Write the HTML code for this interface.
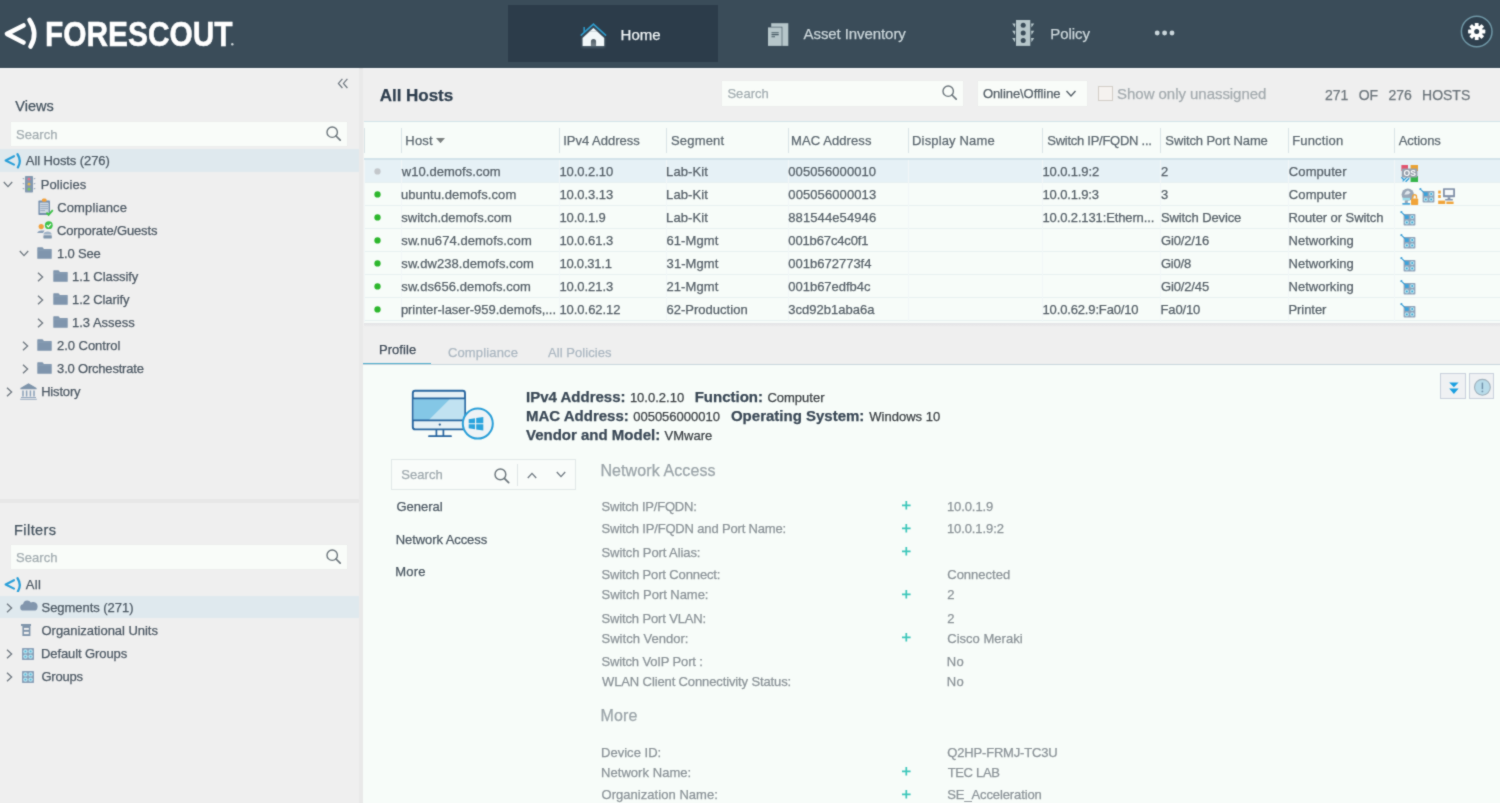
<!DOCTYPE html>
<html><head><meta charset="utf-8"><title>Forescout Console</title>
<style>
html,body{margin:0;padding:0}
body{width:1500px;height:803px;overflow:hidden;position:relative;background:#efefef;font-family:"Liberation Sans",sans-serif}
.a{position:absolute;display:block}
.t{position:absolute;white-space:nowrap;-webkit-text-stroke:0.25px}
#w{position:absolute;left:0;top:0;width:1500px;height:803px;filter:url(#soft)}
.sb{position:absolute;background:#f9fcf9;box-shadow:0 0 1px #e2e6e2}
</style></head><body>
<svg width="0" height="0" style="position:absolute"><defs><filter id="soft" x="0" y="0" width="100%" height="100%" color-interpolation-filters="sRGB"><feConvolveMatrix order="3" kernelMatrix="0.03 0.09 0.03 0.09 0.52 0.09 0.03 0.09 0.03" edgeMode="duplicate" preserveAlpha="false"/></filter></defs></svg>
<div id="w">

<div class="a" style="left:-10px;top:-10px;width:1520px;height:77.5px;background:#3a4c59"></div>
<div class="a" style="left:-10px;top:67.6px;width:1520px;height:1.4px;background:#f8f9fb"></div>
<svg class="a" style="left:0;top:10px" width="245" height="48" viewBox="0 0 245 48">
<path d="M23.5 15.5 L7 23.8 L23.5 32.5" fill="none" stroke="#fff" stroke-width="4.7" stroke-linecap="round" stroke-linejoin="round"/>
<path d="M29.5 10 Q38.5 23.5 30.5 36.5" fill="none" stroke="#fff" stroke-width="4.6" stroke-linecap="round"/>
<text x="45" y="35.6" font-family="Liberation Sans" font-weight="bold" font-size="35" fill="#fff" stroke="#fff" stroke-width="0.5" textLength="187.5" lengthAdjust="spacingAndGlyphs">FORESCOUT</text>
<circle cx="232.3" cy="34.3" r="1.2" fill="#c9d2d6"/>
</svg>
<div class="a" style="left:508px;top:5px;width:210px;height:57px;background:#2c3c4a"></div>
<svg class="a" style="left:579px;top:21px" width="30" height="30" viewBox="0 0 30 30">
<defs><filter id="gl" x="-30%" y="-30%" width="160%" height="160%"><feGaussianBlur stdDeviation="1.3"/></filter>
<linearGradient id="dg" x1="0" y1="0" x2="0" y2="1"><stop offset="0" stop-color="#4c5963"/><stop offset="1" stop-color="#7a868e"/></linearGradient></defs>
<path d="M3 17 L14.4 6 L25.8 17 L25.8 26.4 L3 26.4 Z" fill="#9fb7c2" opacity="0.33" filter="url(#gl)"/>
<path d="M14.4 6.9 L25.2 16.9 L25.2 24.9 L3.6 24.9 L3.6 16.9 Z" fill="#f1f7f9"/>
<path d="M10.6 10.35 H18.2" stroke="#aab9c1" stroke-width="0.55"/>
<path d="M11.9 24.95 V20.7 A2.6 2.6 0 0 1 17.1 20.7 V24.95 Z" fill="url(#dg)"/>
<rect x="4.4" y="6" width="1.5" height="5" fill="#2f9bcb"/>
<path d="M1.7 14.7 L14.4 3.2 L27.1 14.7" fill="none" stroke="#2f9bcb" stroke-width="1.65" stroke-linejoin="miter"/>
</svg>
<div class="t" style="left:620.60px;top:24.50px;font-size:15px;line-height:20px;color:#eef3f4;letter-spacing:0.008px;">Home</div>
<svg class="a" style="left:768px;top:23px" width="21" height="24" viewBox="0 0 21 24">
<rect x="3.2" y="0.2" width="17.1" height="22.7" fill="#b6c6ca"/>
<rect x="-0.6" y="3.8" width="14.9" height="20" fill="#3a4c59"/>
<rect x="0" y="4.4" width="13.7" height="18.5" fill="#b6c6ca"/>
<path d="M3.5 9.7 H10.7 M3.5 11.6 H10.7 M3.5 13.7 H7" stroke="#4a5d67" stroke-width="1.1"/>
</svg>
<div class="t" style="left:803.60px;top:24.40px;font-size:15px;line-height:20px;color:#cbd6da;letter-spacing:-0.085px;">Asset Inventory</div>
<svg class="a" style="left:1011px;top:19px" width="25" height="28" viewBox="0 0 25 28">
<rect x="5" y="1" width="14.3" height="25.9" fill="#b6c6ca"/>
<circle cx="12.2" cy="6.3" r="2.5" fill="#3a4c59"/><circle cx="12.2" cy="13.9" r="2.5" fill="#3a4c59"/><circle cx="12.2" cy="21.5" r="2.5" fill="#3a4c59"/>
<path d="M1.2 4.4 L4.3 4.4 L3.9 8.600000000000001 Z M23.2 4.4 L20.1 4.4 L20.5 8.600000000000001 Z" fill="#b6c6ca"/><path d="M1.2 11.8 L4.3 11.8 L3.9 16.0 Z M23.2 11.8 L20.1 11.8 L20.5 16.0 Z" fill="#b6c6ca"/><path d="M1.2 19.0 L4.3 19.0 L3.9 23.2 Z M23.2 19.0 L20.1 19.0 L20.5 23.2 Z" fill="#b6c6ca"/>
</svg>
<div class="t" style="left:1050.20px;top:24.40px;font-size:15px;line-height:20px;color:#cbd6da;letter-spacing:-0.043px;">Policy</div>
<svg class="a" style="left:1150px;top:26px" width="30" height="14" viewBox="0 0 30 14"><circle cx="7.2" cy="7" r="2.45" fill="#c9d5da"/><circle cx="14.6" cy="7" r="2.45" fill="#c9d5da"/><circle cx="22" cy="7" r="2.45" fill="#c9d5da"/></svg>
<svg class="a" style="left:1459px;top:14px" width="36" height="36" viewBox="0 0 36 36">
<circle cx="17.7" cy="17.5" r="15.3" fill="#2f404e" stroke="#6f97a6" stroke-width="1.5"/>
<g transform="translate(17.7 17.5)" fill="#fff">
<circle r="5.9"/>
<g id="tg"><rect x="-1.9" y="-8.6" width="3.8" height="4" rx="0.6"/></g>
<use href="#tg" transform="rotate(45)"/><use href="#tg" transform="rotate(90)"/><use href="#tg" transform="rotate(135)"/>
<use href="#tg" transform="rotate(180)"/><use href="#tg" transform="rotate(225)"/><use href="#tg" transform="rotate(270)"/><use href="#tg" transform="rotate(315)"/>
<circle r="2.5" fill="#2f404e"/>
</g></svg>
<div class="a" style="left:359px;top:68px;width:4px;height:745px;background:#e9e9e9"></div>
<div class="a" style="left:-10px;top:499px;width:369px;height:4px;background:#e7e7e7"></div>
<svg class="a" style="left:337px;top:78px" width="12" height="11" viewBox="0 0 12 11">
<path d="M5.4 0.8 L1.4 5.4 L5.4 10 M10.4 0.8 L6.4 5.4 L10.4 10" fill="none" stroke="#6f7880" stroke-width="1.2"/></svg>
<div class="t" style="left:15.26px;top:96.48px;font-size:14.5px;line-height:20px;color:#44535f;letter-spacing:0.005px;">Views</div>
<div class="sb" style="left:11px;top:122px;width:336px;height:24px"></div>
<div class="t" style="left:16.02px;top:124.90px;font-size:13px;line-height:20px;color:#a3adb1;letter-spacing:0.064px;">Search</div>
<svg class="a" style="left:326px;top:125.8px" width="15" height="15" viewBox="0 0 15 15"><circle cx="6.2" cy="6.2" r="5.2" fill="none" stroke="#6d777d" stroke-width="1.4"/><path d="M10 10 L14.2 14.2" stroke="#6d777d" stroke-width="1.7" stroke-linecap="round"/></svg>
<div class="a" style="left:-10px;top:149px;width:369px;height:23px;background:#dfe9ee"></div>
<div class="t" style="left:25.80px;top:151.20px;font-size:13px;line-height:20px;color:#4d5964;letter-spacing:-0.091px;">All Hosts (276)</div>
<svg class="a" style="left:4.2px;top:153.1px" width="17.68" height="15.600000000000001" viewBox="0 0 17 15"><path d="M9.6 3.1 L1.6 7.3 L9.6 11.2" fill="none" stroke="#2b9fd8" stroke-width="2.1" stroke-linecap="round" stroke-linejoin="round"/><path d="M13 1.2 Q17.2 7.5 13.4 13.8" fill="none" stroke="#2b9fd8" stroke-width="2.2" stroke-linecap="round"/></svg>
<div class="t" style="left:40.66px;top:174.80px;font-size:13px;line-height:20px;color:#4d5964;letter-spacing:0.130px;">Policies</div>
<svg class="a" style="left:3.4px;top:180.9px" width="10" height="7" viewBox="0 0 10 7"><path d="M0.8 1 L5 5.6 L9.2 1" fill="none" stroke="#6f7880" stroke-width="1.3"/></svg>
<svg class="a" style="left:22px;top:176.0px" width="14.0" height="16.5" viewBox="0 0 14 16.5"><rect x="3" y="0" width="8" height="16.5" rx="0.8" fill="#8399b0"/><circle cx="7" cy="3.2" r="1.4" fill="#e2758c"/><path d="M0.2 1.9000000000000001 L2.3 1.9000000000000001 L2.1 3.8000000000000003 Z" fill="#9aabbd"/><path d="M13.8 1.9000000000000001 L11.7 1.9000000000000001 L11.9 3.8000000000000003 Z" fill="#9aabbd"/><circle cx="7" cy="8.2" r="1.4" fill="#e9b750"/><path d="M0.2 6.8999999999999995 L2.3 6.8999999999999995 L2.1 8.799999999999999 Z" fill="#9aabbd"/><path d="M13.8 6.8999999999999995 L11.7 6.8999999999999995 L11.9 8.799999999999999 Z" fill="#9aabbd"/><circle cx="7" cy="13.2" r="1.4" fill="#7dc860"/><path d="M0.2 11.899999999999999 L2.3 11.899999999999999 L2.1 13.799999999999999 Z" fill="#9aabbd"/><path d="M13.8 11.899999999999999 L11.7 11.899999999999999 L11.9 13.799999999999999 Z" fill="#9aabbd"/></svg>
<div class="t" style="left:57.25px;top:197.80px;font-size:13px;line-height:20px;color:#4d5964;letter-spacing:0.118px;">Compliance</div>
<svg class="a" style="left:38px;top:197.5px" width="16" height="19" viewBox="0 0 16 19">
<rect x="0.4" y="2.6" width="11.6" height="14.4" rx="0.8" fill="#7790ad"/>
<rect x="1.8" y="4.6" width="8.8" height="10.4" fill="#cfd9e3"/>
<path d="M2.4 6.6 H10 M2.4 8.6 H10 M2.4 10.6 H10 M2.4 12.6 H7" stroke="#8da0b6" stroke-width="0.8"/>
<rect x="3.9" y="0.5" width="4.7" height="3.3" rx="1.5" fill="#f0a03c"/>
<path d="M8.4 14.6 L10.6 16.8 L14.8 12.2" fill="none" stroke="#3fc24a" stroke-width="1.9"/>
</svg>
<div class="t" style="left:56.95px;top:220.80px;font-size:13px;line-height:20px;color:#4d5964;letter-spacing:-0.140px;">Corporate/Guests</div>
<svg class="a" style="left:36.5px;top:221.0px" width="17" height="18" viewBox="0 0 17 18">
<circle cx="4.2" cy="5.6" r="2.6" fill="#f0a03c"/>
<circle cx="11.8" cy="4.2" r="3.9" fill="#3fc24a"/>
<path d="M9.8 4.2 L11.3 5.8 L13.9 2.8" fill="none" stroke="#fff" stroke-width="1.2"/>
<path d="M0.2 12 Q1 9.4 4.4 9.4 L7.6 9.4 L6 12 Z" fill="#8aa0b8"/>
<path d="M6.4 13.4 Q7 10.4 10.6 10.4 Q14.2 10.4 14.8 13.4 Z" fill="#9fb2c6"/>
<rect x="6.4" y="14.2" width="8.4" height="3.2" rx="0.6" fill="#7f95ab"/>
</svg>
<div class="t" style="left:56.92px;top:243.80px;font-size:13px;line-height:20px;color:#4d5964;letter-spacing:-0.160px;">1.0 See</div>
<svg class="a" style="left:19.4px;top:250.3px" width="10" height="7" viewBox="0 0 10 7"><path d="M0.8 1 L5 5.6 L9.2 1" fill="none" stroke="#6f7880" stroke-width="1.3"/></svg>
<svg class="a" style="left:37.3px;top:247.3px" width="15" height="12" viewBox="0 0 15 12"><path d="M0.3 0.8 Q0.3 0.2 0.9 0.2 L5.2 0.2 Q5.8 0.2 6.1 0.8 L6.8 2 L14.1 2 Q14.7 2 14.7 2.6 L14.7 11.2 Q14.7 11.8 14.1 11.8 L0.9 11.8 Q0.3 11.8 0.3 11.2 Z" fill="#7f95ad"/><path d="M0.3 3.1 L14.7 3.1" stroke="#93a7bb" stroke-width="0.6"/></svg>
<div class="t" style="left:72.03px;top:266.80px;font-size:13px;line-height:20px;color:#4d5964;letter-spacing:-0.082px;">1.1 Classify</div>
<svg class="a" style="left:37.2px;top:271.5px" width="7" height="10" viewBox="0 0 7 10"><path d="M1 0.8 L5.6 5 L1 9.2" fill="none" stroke="#6f7880" stroke-width="1.3"/></svg>
<svg class="a" style="left:53px;top:270.3px" width="15" height="12" viewBox="0 0 15 12"><path d="M0.3 0.8 Q0.3 0.2 0.9 0.2 L5.2 0.2 Q5.8 0.2 6.1 0.8 L6.8 2 L14.1 2 Q14.7 2 14.7 2.6 L14.7 11.2 Q14.7 11.8 14.1 11.8 L0.9 11.8 Q0.3 11.8 0.3 11.2 Z" fill="#7f95ad"/><path d="M0.3 3.1 L14.7 3.1" stroke="#93a7bb" stroke-width="0.6"/></svg>
<div class="t" style="left:72.03px;top:289.80px;font-size:13px;line-height:20px;color:#4d5964;letter-spacing:-0.106px;">1.2 Clarify</div>
<svg class="a" style="left:37.2px;top:294.5px" width="7" height="10" viewBox="0 0 7 10"><path d="M1 0.8 L5.6 5 L1 9.2" fill="none" stroke="#6f7880" stroke-width="1.3"/></svg>
<svg class="a" style="left:53px;top:293.3px" width="15" height="12" viewBox="0 0 15 12"><path d="M0.3 0.8 Q0.3 0.2 0.9 0.2 L5.2 0.2 Q5.8 0.2 6.1 0.8 L6.8 2 L14.1 2 Q14.7 2 14.7 2.6 L14.7 11.2 Q14.7 11.8 14.1 11.8 L0.9 11.8 Q0.3 11.8 0.3 11.2 Z" fill="#7f95ad"/><path d="M0.3 3.1 L14.7 3.1" stroke="#93a7bb" stroke-width="0.6"/></svg>
<div class="t" style="left:72.03px;top:312.80px;font-size:13px;line-height:20px;color:#4d5964;letter-spacing:-0.014px;">1.3 Assess</div>
<svg class="a" style="left:37.2px;top:317.5px" width="7" height="10" viewBox="0 0 7 10"><path d="M1 0.8 L5.6 5 L1 9.2" fill="none" stroke="#6f7880" stroke-width="1.3"/></svg>
<svg class="a" style="left:53px;top:316.3px" width="15" height="12" viewBox="0 0 15 12"><path d="M0.3 0.8 Q0.3 0.2 0.9 0.2 L5.2 0.2 Q5.8 0.2 6.1 0.8 L6.8 2 L14.1 2 Q14.7 2 14.7 2.6 L14.7 11.2 Q14.7 11.8 14.1 11.8 L0.9 11.8 Q0.3 11.8 0.3 11.2 Z" fill="#7f95ad"/><path d="M0.3 3.1 L14.7 3.1" stroke="#93a7bb" stroke-width="0.6"/></svg>
<div class="t" style="left:56.95px;top:335.80px;font-size:13px;line-height:20px;color:#4d5964;letter-spacing:-0.021px;">2.0 Control</div>
<svg class="a" style="left:21.6px;top:340.5px" width="7" height="10" viewBox="0 0 7 10"><path d="M1 0.8 L5.6 5 L1 9.2" fill="none" stroke="#6f7880" stroke-width="1.3"/></svg>
<svg class="a" style="left:37.3px;top:339.3px" width="15" height="12" viewBox="0 0 15 12"><path d="M0.3 0.8 Q0.3 0.2 0.9 0.2 L5.2 0.2 Q5.8 0.2 6.1 0.8 L6.8 2 L14.1 2 Q14.7 2 14.7 2.6 L14.7 11.2 Q14.7 11.8 14.1 11.8 L0.9 11.8 Q0.3 11.8 0.3 11.2 Z" fill="#7f95ad"/><path d="M0.3 3.1 L14.7 3.1" stroke="#93a7bb" stroke-width="0.6"/></svg>
<div class="t" style="left:57.11px;top:358.80px;font-size:13px;line-height:20px;color:#4d5964;letter-spacing:-0.202px;">3.0 Orchestrate</div>
<svg class="a" style="left:21.6px;top:363.5px" width="7" height="10" viewBox="0 0 7 10"><path d="M1 0.8 L5.6 5 L1 9.2" fill="none" stroke="#6f7880" stroke-width="1.3"/></svg>
<svg class="a" style="left:37.3px;top:362.3px" width="15" height="12" viewBox="0 0 15 12"><path d="M0.3 0.8 Q0.3 0.2 0.9 0.2 L5.2 0.2 Q5.8 0.2 6.1 0.8 L6.8 2 L14.1 2 Q14.7 2 14.7 2.6 L14.7 11.2 Q14.7 11.8 14.1 11.8 L0.9 11.8 Q0.3 11.8 0.3 11.2 Z" fill="#7f95ad"/><path d="M0.3 3.1 L14.7 3.1" stroke="#93a7bb" stroke-width="0.6"/></svg>
<div class="t" style="left:41.16px;top:381.80px;font-size:13px;line-height:20px;color:#4d5964;letter-spacing:-0.170px;">History</div>
<svg class="a" style="left:6.4px;top:386.5px" width="7" height="10" viewBox="0 0 7 10"><path d="M1 0.8 L5.6 5 L1 9.2" fill="none" stroke="#6f7880" stroke-width="1.3"/></svg>
<svg class="a" style="left:20px;top:383.0px" width="17" height="17" viewBox="0 0 17 17">
<path d="M8.5 0.2 L16.6 5 L16.6 6.2 L0.4 6.2 L0.4 5 Z" fill="#7f95ab"/>
<path d="M3 7.4 V13.4 M6.6 7.4 V13.4 M10.4 7.4 V13.4 M14 7.4 V13.4" stroke="#8aa0b8" stroke-width="1.5"/>
<rect x="1" y="14" width="15" height="0.9" fill="#8aa0b8"/>
<rect x="0.2" y="15.8" width="16.6" height="0.9" fill="#8aa0b8"/>
</svg>
<div class="t" style="left:14.04px;top:519.78px;font-size:14.5px;line-height:20px;color:#44535f;letter-spacing:0.432px;">Filters</div>
<div class="sb" style="left:11px;top:545px;width:336px;height:24px"></div>
<div class="t" style="left:16.02px;top:547.90px;font-size:13px;line-height:20px;color:#a3adb1;letter-spacing:0.064px;">Search</div>
<svg class="a" style="left:326px;top:548.8px" width="15" height="15" viewBox="0 0 15 15"><circle cx="6.2" cy="6.2" r="5.2" fill="none" stroke="#6d777d" stroke-width="1.4"/><path d="M10 10 L14.2 14.2" stroke="#6d777d" stroke-width="1.7" stroke-linecap="round"/></svg>
<div class="a" style="left:-10px;top:595.5px;width:369px;height:22.5px;background:#dfe9ee"></div>
<svg class="a" style="left:4.2px;top:576.8px" width="17.68" height="15.600000000000001" viewBox="0 0 17 15"><path d="M9.6 3.1 L1.6 7.3 L9.6 11.2" fill="none" stroke="#2b9fd8" stroke-width="2.1" stroke-linecap="round" stroke-linejoin="round"/><path d="M13 1.2 Q17.2 7.5 13.4 13.8" fill="none" stroke="#2b9fd8" stroke-width="2.2" stroke-linecap="round"/></svg>
<div class="t" style="left:25.70px;top:574.70px;font-size:13px;line-height:20px;color:#4d5964;letter-spacing:0.341px;">All</div>
<svg class="a" style="left:6.4px;top:602.6px" width="7" height="10" viewBox="0 0 7 10"><path d="M1 0.8 L5.6 5 L1 9.2" fill="none" stroke="#6f7880" stroke-width="1.3"/></svg>
<svg class="a" style="left:20px;top:600px" width="18" height="11" viewBox="0 0 18 11">
<path d="M3.6 10.6 Q0.2 10.6 0.2 7.4 Q0.2 4.6 3 4.2 Q3.6 0.4 7.2 0.4 Q9.8 0.4 10.8 2.6 Q12 1.6 13.6 2 Q17.6 2.6 17.6 6.4 Q17.6 10.6 13.8 10.6 Z" fill="#8296ad"/></svg>
<div class="t" style="left:41.52px;top:597.80px;font-size:13px;line-height:20px;color:#4d5964;letter-spacing:-0.041px;">Segments (271)</div>
<svg class="a" style="left:20.5px;top:623.6px" width="10.8" height="12.2" viewBox="0 0 11 12.5">
<rect x="0" y="0" width="11" height="2" fill="#7f94aa"/>
<rect x="1.4" y="2" width="8.2" height="10.5" fill="#7f94aa"/>
<rect x="3" y="4" width="5" height="2" fill="#efefef"/>
<rect x="3" y="8" width="5" height="2.4" fill="#efefef"/>
</svg>
<div class="t" style="left:41.52px;top:620.70px;font-size:13px;line-height:20px;color:#4d5964;letter-spacing:-0.033px;">Organizational Units</div>
<svg class="a" style="left:6.4px;top:648.5px" width="7" height="10" viewBox="0 0 7 10"><path d="M1 0.8 L5.6 5 L1 9.2" fill="none" stroke="#6f7880" stroke-width="1.3"/></svg>
<svg class="a" style="left:22.3px;top:647.5px" width="12" height="12" viewBox="0 0 12 12"><rect x="0" y="0" width="12" height="12" rx="0.8" fill="#8aa0b8"/><circle cx="3.4" cy="3.4" r="2.2" fill="#b5e2ef"/><circle cx="8.6" cy="3.4" r="2.2" fill="#b5e2ef"/><circle cx="3.4" cy="8.6" r="2.2" fill="#b5e2ef"/><circle cx="8.6" cy="8.6" r="2.2" fill="#b5e2ef"/><circle cx="3.4" cy="3.4" r="0.9" fill="#53b4d6"/><circle cx="8.6" cy="3.4" r="0.9" fill="#53b4d6"/><circle cx="3.4" cy="8.6" r="0.9" fill="#53b4d6"/><circle cx="8.6" cy="8.6" r="0.9" fill="#53b4d6"/></svg>
<div class="t" style="left:41.06px;top:643.50px;font-size:13px;line-height:20px;color:#4d5964;letter-spacing:-0.102px;">Default Groups</div>
<svg class="a" style="left:6.4px;top:671.5px" width="7" height="10" viewBox="0 0 7 10"><path d="M1 0.8 L5.6 5 L1 9.2" fill="none" stroke="#6f7880" stroke-width="1.3"/></svg>
<svg class="a" style="left:22.3px;top:670.6px" width="12" height="12" viewBox="0 0 12 12"><rect x="0" y="0" width="12" height="12" rx="0.8" fill="#8aa0b8"/><circle cx="3.4" cy="3.4" r="2.2" fill="#b5e2ef"/><circle cx="8.6" cy="3.4" r="2.2" fill="#b5e2ef"/><circle cx="3.4" cy="8.6" r="2.2" fill="#b5e2ef"/><circle cx="8.6" cy="8.6" r="2.2" fill="#b5e2ef"/><circle cx="3.4" cy="3.4" r="0.9" fill="#53b4d6"/><circle cx="8.6" cy="3.4" r="0.9" fill="#53b4d6"/><circle cx="3.4" cy="8.6" r="0.9" fill="#53b4d6"/><circle cx="8.6" cy="8.6" r="0.9" fill="#53b4d6"/></svg>
<div class="t" style="left:41.45px;top:666.60px;font-size:13px;line-height:20px;color:#4d5964;letter-spacing:-0.227px;">Groups</div>
<div class="t" style="left:379.77px;top:84.51px;font-size:17px;line-height:22px;color:#2e3e4e;font-weight:bold;letter-spacing:-0.036px;">All Hosts</div>
<div class="sb" style="left:722px;top:81px;width:241px;height:24.5px"></div>
<div class="t" style="left:727.41px;top:83.70px;font-size:13px;line-height:20px;color:#a3adb1;letter-spacing:0.044px;">Search</div>
<svg class="a" style="left:942px;top:85px" width="15" height="15" viewBox="0 0 15 15"><circle cx="6.2" cy="6.2" r="5.2" fill="none" stroke="#6d777d" stroke-width="1.4"/><path d="M10 10 L14.2 14.2" stroke="#6d777d" stroke-width="1.7" stroke-linecap="round"/></svg>
<div class="sb" style="left:977.5px;top:81px;width:109px;height:24.5px"></div>
<div class="t" style="left:982.91px;top:83.70px;font-size:13px;line-height:20px;color:#566068;letter-spacing:-0.068px;">Online\Offline</div>
<svg class="a" style="left:1065px;top:90px" width="12" height="7.5" viewBox="0 0 10 7"><path d="M0.8 1 L5 5.6 L9.2 1" fill="none" stroke="#566068" stroke-width="1.3"/></svg>
<div class="a" style="left:1098px;top:86px;width:13px;height:12.5px;border:1px solid #d2cdc7;background:#f5f2ef"></div>
<div class="t" style="left:1117.12px;top:84.10px;font-size:15px;line-height:20px;color:#a4abaf;letter-spacing:-0.045px;">Show only unassigned</div>
<div class="t" style="left:1325.00px;top:84.75px;font-size:14px;line-height:20px;color:#6d767c;word-spacing:6.4px;">271 OF 276 HOSTS</div>
<div class="a" style="left:363.5px;top:121px;width:1146.5px;height:201.5px;background:#f7fcf9"></div>
<div class="a" style="left:363.5px;top:120.5px;width:1146.5px;height:1.5px;background:#d2e4e8"></div>
<div class="a" style="left:363.5px;top:158.2px;width:1146.5px;height:1.4px;background:#d3e3ea"></div>
<div class="a" style="left:363.5px;top:322.6px;width:1146.5px;height:4.6px;background:linear-gradient(#e2e3e6,#e9e9ea 60%,#efefef)"></div>
<div class="a" style="left:363.5px;top:160px;width:1146.5px;height:22.5px;background:#e6f1f6"></div>
<div class="a" style="left:363.5px;top:182.2px;width:1146.5px;height:1.2px;background:#e7f0f1"></div>
<div class="a" style="left:363.5px;top:205.2px;width:1146.5px;height:1.2px;background:#e7f0f1"></div>
<div class="a" style="left:363.5px;top:228.2px;width:1146.5px;height:1.2px;background:#e7f0f1"></div>
<div class="a" style="left:363.5px;top:251.2px;width:1146.5px;height:1.2px;background:#e7f0f1"></div>
<div class="a" style="left:363.5px;top:274.2px;width:1146.5px;height:1.2px;background:#e7f0f1"></div>
<div class="a" style="left:363.5px;top:297.2px;width:1146.5px;height:1.2px;background:#e7f0f1"></div>
<div class="a" style="left:363.5px;top:320.2px;width:1146.5px;height:1.2px;background:#e7f0f1"></div>
<div class="a" style="left:364.2px;top:128px;width:1.1px;height:25px;background:#d9e3e6"></div>
<div class="a" style="left:364.3px;top:160px;width:1px;height:162px;background:#f1f6f7"></div>
<div class="a" style="left:401.0px;top:128px;width:1.1px;height:25px;background:#d9e3e6"></div>
<div class="a" style="left:401.1px;top:160px;width:1px;height:162px;background:#f1f6f7"></div>
<div class="a" style="left:559.0px;top:128px;width:1.1px;height:25px;background:#d9e3e6"></div>
<div class="a" style="left:559.1px;top:160px;width:1px;height:162px;background:#f1f6f7"></div>
<div class="a" style="left:666.1999999999999px;top:128px;width:1.1px;height:25px;background:#d9e3e6"></div>
<div class="a" style="left:666.3px;top:160px;width:1px;height:162px;background:#f1f6f7"></div>
<div class="a" style="left:787.6px;top:128px;width:1.1px;height:25px;background:#d9e3e6"></div>
<div class="a" style="left:787.7px;top:160px;width:1px;height:162px;background:#f1f6f7"></div>
<div class="a" style="left:907.8px;top:128px;width:1.1px;height:25px;background:#d9e3e6"></div>
<div class="a" style="left:907.9px;top:160px;width:1px;height:162px;background:#f1f6f7"></div>
<div class="a" style="left:1042.0px;top:128px;width:1.1px;height:25px;background:#d9e3e6"></div>
<div class="a" style="left:1042.1px;top:160px;width:1px;height:162px;background:#f1f6f7"></div>
<div class="a" style="left:1160.2px;top:128px;width:1.1px;height:25px;background:#d9e3e6"></div>
<div class="a" style="left:1160.3px;top:160px;width:1px;height:162px;background:#f1f6f7"></div>
<div class="a" style="left:1288.2px;top:128px;width:1.1px;height:25px;background:#d9e3e6"></div>
<div class="a" style="left:1288.3px;top:160px;width:1px;height:162px;background:#f1f6f7"></div>
<div class="a" style="left:1394.0px;top:128px;width:1.1px;height:25px;background:#d9e3e6"></div>
<div class="a" style="left:1394.1px;top:160px;width:1px;height:162px;background:#f1f6f7"></div>
<div class="t" style="left:405.36px;top:130.70px;font-size:13px;line-height:20px;color:#5d6870;letter-spacing:0.197px;">Host</div>
<div class="t" style="left:563.23px;top:130.70px;font-size:13px;line-height:20px;color:#5d6870;letter-spacing:-0.016px;">IPv4 Address</div>
<div class="t" style="left:671.01px;top:130.70px;font-size:13px;line-height:20px;color:#5d6870;letter-spacing:0.186px;">Segment</div>
<div class="t" style="left:790.96px;top:130.70px;font-size:13px;line-height:20px;color:#5d6870;letter-spacing:0.103px;">MAC Address</div>
<div class="t" style="left:912.06px;top:130.70px;font-size:13px;line-height:20px;color:#5d6870;letter-spacing:0.155px;">Display Name</div>
<div class="t" style="left:1047.32px;top:130.70px;font-size:13px;line-height:20px;color:#5d6870;letter-spacing:-0.266px;">Switch IP/FQDN ...</div>
<div class="t" style="left:1165.32px;top:130.70px;font-size:13px;line-height:20px;color:#5d6870;letter-spacing:-0.100px;">Switch Port Name</div>
<div class="t" style="left:1292.16px;top:130.70px;font-size:13px;line-height:20px;color:#5d6870;letter-spacing:0.171px;">Function</div>
<div class="t" style="left:1398.80px;top:130.70px;font-size:13px;line-height:20px;color:#5d6870;letter-spacing:-0.098px;">Actions</div>
<svg class="a" style="left:436px;top:137.6px" width="9" height="5.2" viewBox="0 0 9 5.2"><path d="M0 0 L9 0 L4.5 5.2 Z" fill="#7b8080"/></svg>
<svg class="a" style="left:370px;top:160px" width="16" height="23" viewBox="0 0 16 23"><circle cx="7.5" cy="11.4" r="3.15" fill="#c3c7cb"/></svg>
<div class="t" style="left:401.73px;top:161.90px;font-size:13px;line-height:20px;color:#566068;letter-spacing:0.051px;">w10.demofs.com</div>
<div class="t" style="left:559.42px;top:161.90px;font-size:13px;line-height:20px;color:#566068;letter-spacing:-0.056px;">10.0.2.10</div>
<div class="t" style="left:666.06px;top:161.90px;font-size:13px;line-height:20px;color:#566068;letter-spacing:0.121px;">Lab-Kit</div>
<div class="t" style="left:788.31px;top:161.90px;font-size:13px;line-height:20px;color:#566068;letter-spacing:0.094px;">005056000010</div>
<div class="t" style="left:1042.53px;top:161.90px;font-size:13px;line-height:20px;color:#566068;letter-spacing:-0.136px;">10.0.1.9:2</div>
<div class="t" style="left:1160.95px;top:161.90px;font-size:13px;line-height:20px;color:#566068;letter-spacing:0.253px;">2</div>
<div class="t" style="left:1288.85px;top:161.90px;font-size:13px;line-height:20px;color:#566068;letter-spacing:0.082px;">Computer</div>
<svg class="a" style="left:370px;top:183px" width="16" height="23" viewBox="0 0 16 23"><circle cx="7.5" cy="11.4" r="3.15" fill="#2db72d"/></svg>
<div class="t" style="left:400.89px;top:184.90px;font-size:13px;line-height:20px;color:#566068;letter-spacing:0.074px;">ubuntu.demofs.com</div>
<div class="t" style="left:559.42px;top:184.90px;font-size:13px;line-height:20px;color:#566068;letter-spacing:-0.048px;">10.0.3.13</div>
<div class="t" style="left:666.06px;top:184.90px;font-size:13px;line-height:20px;color:#566068;letter-spacing:0.121px;">Lab-Kit</div>
<div class="t" style="left:788.31px;top:184.90px;font-size:13px;line-height:20px;color:#566068;letter-spacing:0.100px;">005056000013</div>
<div class="t" style="left:1042.53px;top:184.90px;font-size:13px;line-height:20px;color:#566068;letter-spacing:-0.143px;">10.0.1.9:3</div>
<div class="t" style="left:1161.11px;top:184.90px;font-size:13px;line-height:20px;color:#566068;letter-spacing:0.025px;">3</div>
<div class="t" style="left:1288.85px;top:184.90px;font-size:13px;line-height:20px;color:#566068;letter-spacing:0.082px;">Computer</div>
<svg class="a" style="left:370px;top:206px" width="16" height="23" viewBox="0 0 16 23"><circle cx="7.5" cy="11.4" r="3.15" fill="#2db72d"/></svg>
<div class="t" style="left:401.34px;top:207.90px;font-size:13px;line-height:20px;color:#566068;letter-spacing:-0.002px;">switch.demofs.com</div>
<div class="t" style="left:559.42px;top:207.90px;font-size:13px;line-height:20px;color:#566068;letter-spacing:-0.086px;">10.0.1.9</div>
<div class="t" style="left:666.06px;top:207.90px;font-size:13px;line-height:20px;color:#566068;letter-spacing:0.121px;">Lab-Kit</div>
<div class="t" style="left:788.25px;top:207.90px;font-size:13px;line-height:20px;color:#566068;letter-spacing:0.106px;">881544e54946</div>
<div class="t" style="left:1042.53px;top:207.90px;font-size:13px;line-height:20px;color:#566068;letter-spacing:-0.129px;">10.0.2.131:Ethern...</div>
<div class="t" style="left:1161.01px;top:207.90px;font-size:13px;line-height:20px;color:#566068;letter-spacing:-0.109px;">Switch Device</div>
<div class="t" style="left:1288.46px;top:207.90px;font-size:13px;line-height:20px;color:#566068;letter-spacing:-0.068px;">Router or Switch</div>
<svg class="a" style="left:1400.3px;top:210.8px" width="16" height="15" viewBox="0 0 16 15"><rect x="3.6" y="3" width="11.8" height="11.5" rx="0.8" fill="#8fa4bb"/><circle cx="12.2" cy="6" r="2.1" fill="#b5e2ef"/><circle cx="6.8" cy="11.4" r="2.1" fill="#b5e2ef"/><circle cx="12.2" cy="11.4" r="2.1" fill="#b5e2ef"/><circle cx="12.2" cy="6" r="0.9" fill="#3aa5d4"/><circle cx="6.8" cy="11.4" r="0.9" fill="#3aa5d4"/><circle cx="12.2" cy="11.4" r="0.9" fill="#3aa5d4"/><circle cx="1.4" cy="1.2" r="1.1" fill="#3f9fd6"/><path d="M2.2 2 L6.4 5.8" fill="none" stroke="#3aa0d8" stroke-width="1.1"/><path d="M5 4.3 L8.7 4.3 L8.7 7.9 L5 7.9 Z" fill="#3aa3dc"/></svg>
<svg class="a" style="left:370px;top:229px" width="16" height="23" viewBox="0 0 16 23"><circle cx="7.5" cy="11.4" r="3.15" fill="#2db72d"/></svg>
<div class="t" style="left:401.34px;top:230.90px;font-size:13px;line-height:20px;color:#566068;letter-spacing:0.058px;">sw.nu674.demofs.com</div>
<div class="t" style="left:559.42px;top:230.90px;font-size:13px;line-height:20px;color:#566068;letter-spacing:-0.048px;">10.0.61.3</div>
<div class="t" style="left:666.45px;top:230.90px;font-size:13px;line-height:20px;color:#566068;letter-spacing:0.088px;">61-Mgmt</div>
<div class="t" style="left:788.31px;top:230.90px;font-size:13px;line-height:20px;color:#566068;letter-spacing:-0.133px;">001b67c4c0f1</div>
<div class="t" style="left:1160.95px;top:230.90px;font-size:13px;line-height:20px;color:#566068;letter-spacing:-0.134px;">Gi0/2/16</div>
<div class="t" style="left:1288.46px;top:230.90px;font-size:13px;line-height:20px;color:#566068;letter-spacing:0.039px;">Networking</div>
<svg class="a" style="left:1400.3px;top:233.8px" width="16" height="15" viewBox="0 0 16 15"><rect x="3.6" y="3" width="11.8" height="11.5" rx="0.8" fill="#8fa4bb"/><circle cx="12.2" cy="6" r="2.1" fill="#b5e2ef"/><circle cx="6.8" cy="11.4" r="2.1" fill="#b5e2ef"/><circle cx="12.2" cy="11.4" r="2.1" fill="#b5e2ef"/><circle cx="12.2" cy="6" r="0.9" fill="#3aa5d4"/><circle cx="6.8" cy="11.4" r="0.9" fill="#3aa5d4"/><circle cx="12.2" cy="11.4" r="0.9" fill="#3aa5d4"/><circle cx="1.4" cy="1.2" r="1.1" fill="#3f9fd6"/><path d="M2.2 2 L6.4 5.8" fill="none" stroke="#3aa0d8" stroke-width="1.1"/><path d="M5 4.3 L8.7 4.3 L8.7 7.9 L5 7.9 Z" fill="#3aa3dc"/></svg>
<svg class="a" style="left:370px;top:252px" width="16" height="23" viewBox="0 0 16 23"><circle cx="7.5" cy="11.4" r="3.15" fill="#2db72d"/></svg>
<div class="t" style="left:401.34px;top:253.90px;font-size:13px;line-height:20px;color:#566068;letter-spacing:0.056px;">sw.dw238.demofs.com</div>
<div class="t" style="left:559.42px;top:253.90px;font-size:13px;line-height:20px;color:#566068;letter-spacing:-0.202px;">10.0.31.1</div>
<div class="t" style="left:666.61px;top:253.90px;font-size:13px;line-height:20px;color:#566068;letter-spacing:0.061px;">31-Mgmt</div>
<div class="t" style="left:788.31px;top:253.90px;font-size:13px;line-height:20px;color:#566068;letter-spacing:0.001px;">001b672773f4</div>
<div class="t" style="left:1160.95px;top:253.90px;font-size:13px;line-height:20px;color:#566068;letter-spacing:-0.225px;">Gi0/8</div>
<div class="t" style="left:1288.46px;top:253.90px;font-size:13px;line-height:20px;color:#566068;letter-spacing:0.039px;">Networking</div>
<svg class="a" style="left:1400.3px;top:256.8px" width="16" height="15" viewBox="0 0 16 15"><rect x="3.6" y="3" width="11.8" height="11.5" rx="0.8" fill="#8fa4bb"/><circle cx="12.2" cy="6" r="2.1" fill="#b5e2ef"/><circle cx="6.8" cy="11.4" r="2.1" fill="#b5e2ef"/><circle cx="12.2" cy="11.4" r="2.1" fill="#b5e2ef"/><circle cx="12.2" cy="6" r="0.9" fill="#3aa5d4"/><circle cx="6.8" cy="11.4" r="0.9" fill="#3aa5d4"/><circle cx="12.2" cy="11.4" r="0.9" fill="#3aa5d4"/><circle cx="1.4" cy="1.2" r="1.1" fill="#3f9fd6"/><path d="M2.2 2 L6.4 5.8" fill="none" stroke="#3aa0d8" stroke-width="1.1"/><path d="M5 4.3 L8.7 4.3 L8.7 7.9 L5 7.9 Z" fill="#3aa3dc"/></svg>
<svg class="a" style="left:370px;top:275px" width="16" height="23" viewBox="0 0 16 23"><circle cx="7.5" cy="11.4" r="3.15" fill="#2db72d"/></svg>
<div class="t" style="left:401.34px;top:276.90px;font-size:13px;line-height:20px;color:#566068;letter-spacing:0.056px;">sw.ds656.demofs.com</div>
<div class="t" style="left:559.42px;top:276.90px;font-size:13px;line-height:20px;color:#566068;letter-spacing:-0.048px;">10.0.21.3</div>
<div class="t" style="left:666.45px;top:276.90px;font-size:13px;line-height:20px;color:#566068;letter-spacing:0.088px;">21-Mgmt</div>
<div class="t" style="left:788.31px;top:276.90px;font-size:13px;line-height:20px;color:#566068;letter-spacing:-0.019px;">001b67edfb4c</div>
<div class="t" style="left:1160.95px;top:276.90px;font-size:13px;line-height:20px;color:#566068;letter-spacing:-0.139px;">Gi0/2/45</div>
<div class="t" style="left:1288.46px;top:276.90px;font-size:13px;line-height:20px;color:#566068;letter-spacing:0.039px;">Networking</div>
<svg class="a" style="left:1400.3px;top:279.8px" width="16" height="15" viewBox="0 0 16 15"><rect x="3.6" y="3" width="11.8" height="11.5" rx="0.8" fill="#8fa4bb"/><circle cx="12.2" cy="6" r="2.1" fill="#b5e2ef"/><circle cx="6.8" cy="11.4" r="2.1" fill="#b5e2ef"/><circle cx="12.2" cy="11.4" r="2.1" fill="#b5e2ef"/><circle cx="12.2" cy="6" r="0.9" fill="#3aa5d4"/><circle cx="6.8" cy="11.4" r="0.9" fill="#3aa5d4"/><circle cx="12.2" cy="11.4" r="0.9" fill="#3aa5d4"/><circle cx="1.4" cy="1.2" r="1.1" fill="#3f9fd6"/><path d="M2.2 2 L6.4 5.8" fill="none" stroke="#3aa0d8" stroke-width="1.1"/><path d="M5 4.3 L8.7 4.3 L8.7 7.9 L5 7.9 Z" fill="#3aa3dc"/></svg>
<svg class="a" style="left:370px;top:298px" width="16" height="23" viewBox="0 0 16 23"><circle cx="7.5" cy="11.4" r="3.15" fill="#2db72d"/></svg>
<div class="t" style="left:400.89px;top:299.90px;font-size:13px;line-height:20px;color:#566068;letter-spacing:-0.033px;">printer-laser-959.demofs,...</div>
<div class="t" style="left:559.42px;top:299.90px;font-size:13px;line-height:20px;color:#566068;letter-spacing:-0.037px;">10.0.62.12</div>
<div class="t" style="left:666.45px;top:299.90px;font-size:13px;line-height:20px;color:#566068;letter-spacing:0.020px;">62-Production</div>
<div class="t" style="left:788.31px;top:299.90px;font-size:13px;line-height:20px;color:#566068;letter-spacing:0.012px;">3cd92b1aba6a</div>
<div class="t" style="left:1042.53px;top:299.90px;font-size:13px;line-height:20px;color:#566068;letter-spacing:-0.148px;">10.0.62.9:Fa0/10</div>
<div class="t" style="left:1160.56px;top:299.90px;font-size:13px;line-height:20px;color:#566068;letter-spacing:-0.167px;">Fa0/10</div>
<div class="t" style="left:1288.46px;top:299.90px;font-size:13px;line-height:20px;color:#566068;letter-spacing:-0.058px;">Printer</div>
<svg class="a" style="left:1400.3px;top:302.8px" width="16" height="15" viewBox="0 0 16 15"><rect x="3.6" y="3" width="11.8" height="11.5" rx="0.8" fill="#8fa4bb"/><circle cx="12.2" cy="6" r="2.1" fill="#b5e2ef"/><circle cx="6.8" cy="11.4" r="2.1" fill="#b5e2ef"/><circle cx="12.2" cy="11.4" r="2.1" fill="#b5e2ef"/><circle cx="12.2" cy="6" r="0.9" fill="#3aa5d4"/><circle cx="6.8" cy="11.4" r="0.9" fill="#3aa5d4"/><circle cx="12.2" cy="11.4" r="0.9" fill="#3aa5d4"/><circle cx="1.4" cy="1.2" r="1.1" fill="#3f9fd6"/><path d="M2.2 2 L6.4 5.8" fill="none" stroke="#3aa0d8" stroke-width="1.1"/><path d="M5 4.3 L8.7 4.3 L8.7 7.9 L5 7.9 Z" fill="#3aa3dc"/></svg>
<svg class="a" style="left:1400.5px;top:165px" width="17.5" height="17" viewBox="0 0 17.5 17">
<rect x="0.4" y="0" width="6.6" height="6" fill="#e2546e"/>
<rect x="9.6" y="0" width="7.4" height="6" fill="#eaa233"/>
<rect x="9.6" y="11" width="7.4" height="6" fill="#35b54a"/>
<path d="M0.4 12.2 L3 15 M1.6 16.4 L6.4 11.6 M4.6 16.8 L8.2 13.2" stroke="#2f9fd8" stroke-width="1.3"/>
<rect x="0.8" y="3.5" width="15.6" height="9" rx="1" fill="#98a1ad"/>
<text x="8.7" y="11.1" text-anchor="middle" font-family="Liberation Sans" font-weight="bold" font-size="8.6" fill="#fff">OS</text>
</svg>
<svg class="a" style="left:1400.5px;top:188px" width="18" height="17.5" viewBox="0 0 18 17.5">
<circle cx="6.8" cy="6.6" r="6.2" fill="#9aa7b6"/>
<path d="M3.4 6.8 Q4.2 3 7.2 2.4 L9.6 4.6 L7.6 6.2 Z" fill="#dfe6ec"/>
<rect x="1.6" y="9.8" width="7.4" height="2.6" fill="#9bdcea"/>
<rect x="3.8" y="12.4" width="3" height="2.6" fill="#9aa7b6"/>
<rect x="1.2" y="15" width="8.2" height="1.8" rx="0.8" fill="#4ba6d8"/>
<rect x="10" y="10.4" width="7.2" height="6.6" rx="0.8" fill="#f0a43a"/>
<path d="M11.7 10.6 V8.8 Q11.7 6.8 13.6 6.8 Q15.5 6.8 15.5 8.8 V10.6" fill="none" stroke="#f0a43a" stroke-width="1.4"/>
</svg>
<svg class="a" style="left:1418.8px;top:188.2px" width="16" height="15" viewBox="0 0 16 15"><rect x="3.6" y="3" width="11.8" height="11.5" rx="0.8" fill="#8fa4bb"/><circle cx="12.2" cy="6" r="2.1" fill="#b5e2ef"/><circle cx="6.8" cy="11.4" r="2.1" fill="#b5e2ef"/><circle cx="12.2" cy="11.4" r="2.1" fill="#b5e2ef"/><circle cx="12.2" cy="6" r="0.9" fill="#3aa5d4"/><circle cx="6.8" cy="11.4" r="0.9" fill="#3aa5d4"/><circle cx="12.2" cy="11.4" r="0.9" fill="#3aa5d4"/><circle cx="1.4" cy="1.2" r="1.1" fill="#3f9fd6"/><path d="M2.2 2 L6.4 5.8" fill="none" stroke="#3aa0d8" stroke-width="1.1"/><path d="M5 4.3 L8.7 4.3 L8.7 7.9 L5 7.9 Z" fill="#3aa3dc"/></svg>
<svg class="a" style="left:1438.4px;top:188.2px" width="17.5" height="16.5" viewBox="0 0 17.5 16.5">
<rect x="5" y="0.2" width="12" height="9" rx="0.6" fill="#8593aa"/>
<rect x="6.8" y="1.9" width="8.4" height="5.2" fill="#f6f9fa"/>
<rect x="9.6" y="9.2" width="2.8" height="2" fill="#8593aa"/>
<rect x="7.2" y="11" width="7.6" height="1.5" fill="#8593aa"/>
<rect x="0.2" y="2.6" width="2.6" height="3" fill="#f0a43a"/>
<rect x="0.2" y="7" width="2.6" height="3" fill="#f0a43a"/>
<rect x="0.2" y="12.6" width="7" height="3.4" fill="#f0a43a"/>
<rect x="8.4" y="13.6" width="7.2" height="2.4" fill="#f0a43a"/>
</svg>
<div class="t" style="left:378.96px;top:340.30px;font-size:13px;line-height:20px;color:#3e4a57;letter-spacing:0.062px;">Profile</div>
<div class="t" style="left:447.95px;top:342.70px;font-size:13px;line-height:20px;color:#abb7c1;letter-spacing:0.151px;">Compliance</div>
<div class="t" style="left:548.00px;top:342.70px;font-size:13px;line-height:20px;color:#abb7c1;letter-spacing:0.055px;">All Policies</div>
<div class="a" style="left:363px;top:365px;width:1147px;height:448px;background:#f7fcf9"></div>
<div class="a" style="left:363px;top:363.6px;width:1147px;height:1.1px;background:#c9d6dd"></div>
<div class="a" style="left:363px;top:362.7px;width:68px;height:1.8px;background:linear-gradient(#6cc3da,#3d9bc0)"></div>
<svg class="a" style="left:408px;top:386px" width="92" height="58" viewBox="0 0 92 58">
<rect x="4.8" y="4.8" width="52.2" height="38.6" rx="2.4" fill="#e6f0f5" stroke="#2966a0" stroke-width="1.9"/>
<rect x="5.6" y="12.6" width="50.6" height="21.4" fill="#84c7e6"/>
<path d="M56.2 12.6 L56.2 34 L20.8 34 L42.4 12.6 Z" fill="#c1e2f1"/>
<path d="M4.8 12.4 H57 M4.8 34.4 H57" stroke="#2966a0" stroke-width="1.7"/>
<circle cx="31.8" cy="38.6" r="1.15" fill="#2b5f90"/>
<path d="M28.4 43.4 V50 M35.4 43.4 V50" stroke="#2966a0" stroke-width="1.7"/>
<path d="M21 50.2 H43" stroke="#2966a0" stroke-width="1.8" stroke-linecap="round"/>
<circle cx="69.8" cy="37.6" r="15" fill="#eef3f6" stroke="#2b9fd8" stroke-width="2"/>
<path d="M60.7 33.2 L67 32.2 L67 37.2 L60.7 37.2 Z M68.2 32 L75.3 30.9 L75.3 37.2 L68.2 37.2 Z M60.7 38.2 L67 38.2 L67 43.2 L60.7 42.2 Z M68.2 38.2 L75.3 38.2 L75.3 44.5 L68.2 43.4 Z" fill="#2ba4dd"/>
</svg>
<div class="t" style="left:526.00px;top:387.00px;font-size:15px;line-height:20px;color:#3a4856;"><span style="font-weight:bold;font-size:15px;color:#3a4856">IPv4 Address:</span><span style="display:inline-block;width:4.4px"></span><span style="font-size:13px;color:#3d4246">10.0.2.10</span><span style="display:inline-block;width:10.6px"></span><span style="font-weight:bold;font-size:15px;color:#3a4856">Function:</span><span style="display:inline-block;width:4.4px"></span><span style="font-size:13px;color:#3d4246">Computer</span></div>
<div class="t" style="left:526.00px;top:406.00px;font-size:15px;line-height:20px;color:#3a4856;"><span style="font-weight:bold;font-size:15px;color:#3a4856">MAC Address:</span><span style="display:inline-block;width:4.4px"></span><span style="font-size:13px;color:#3d4246">005056000010</span><span style="display:inline-block;width:11px"></span><span style="font-weight:bold;font-size:15px;color:#3a4856">Operating System:</span><span style="display:inline-block;width:5px"></span><span style="font-size:13px;color:#3d4246">Windows 10</span></div>
<div class="t" style="left:526.00px;top:425.00px;font-size:15px;line-height:20px;color:#3a4856;"><span style="font-weight:bold;font-size:15px;color:#3a4856">Vendor and Model:</span><span style="display:inline-block;width:4.4px"></span><span style="font-size:13px;color:#3d4246">VMware</span></div>
<div class="a" style="left:1440.2px;top:373.3px;width:23.8px;height:23.8px;border:1.3px solid #c9d1dc;background:#eff1f3"></div>
<div class="a" style="left:1468.7px;top:373.3px;width:23.8px;height:23.8px;border:1.3px solid #c9d1dc;background:#eff1f3"></div>
<svg class="a" style="left:1448.8px;top:381.8px" width="9.8" height="12.4" viewBox="0 0 10.4 12.6">
<path d="M0.2 0.2 L10.2 0.2 L5.2 5.4 Z M0.2 6.6 L10.2 6.6 L5.2 12.4 Z" fill="#1a9fe0"/></svg>
<svg class="a" style="left:1473px;top:377.6px" width="19" height="19" viewBox="0 0 19 19">
<circle cx="9.4" cy="9.3" r="7.9" fill="#b9dcea" stroke="#9fb1bc" stroke-width="1.1"/>
<rect x="8.7" y="4.6" width="1.4" height="6.6" fill="#6f90a9"/><circle cx="9.4" cy="13.4" r="0.9" fill="#6f90a9"/></svg>
<div class="a" style="left:391.3px;top:459.3px;width:184.4px;height:31px;border:1.1px solid #e1e8e8;background:#f9fcfa;box-sizing:border-box"></div>
<div class="t" style="left:401.22px;top:464.90px;font-size:13px;line-height:20px;color:#9fa9ae;letter-spacing:0.064px;">Search</div>
<svg class="a" style="left:494.2px;top:468.2px" width="15.5" height="15.5" viewBox="0 0 15 15"><circle cx="6.2" cy="6.2" r="5.2" fill="none" stroke="#6d777d" stroke-width="1.4"/><path d="M10 10 L14.2 14.2" stroke="#6d777d" stroke-width="1.7" stroke-linecap="round"/></svg>
<div class="a" style="left:517.2px;top:463.6px;width:1.1px;height:22.6px;background:#dfe5e6"></div>
<svg class="a" style="left:527.2px;top:471.6px" width="10" height="7" viewBox="0 0 10 7"><path d="M0.8 6 L5 1.4 L9.2 6" fill="none" stroke="#6f7880" stroke-width="1.3"/></svg>
<svg class="a" style="left:556.2px;top:471.4px" width="10" height="7" viewBox="0 0 10 7"><path d="M0.8 1 L5 5.6 L9.2 1" fill="none" stroke="#6f7880" stroke-width="1.3"/></svg>
<div class="t" style="left:396.45px;top:497.00px;font-size:13px;line-height:20px;color:#4d5964;letter-spacing:0.008px;">General</div>
<div class="t" style="left:395.66px;top:529.50px;font-size:13px;line-height:20px;color:#4d5964;letter-spacing:-0.074px;">Network Access</div>
<div class="t" style="left:395.16px;top:561.50px;font-size:13px;line-height:20px;color:#4d5964;letter-spacing:0.262px;">More</div>
<div class="t" style="left:600.42px;top:460.66px;font-size:16px;line-height:20px;color:#9ba4a9;letter-spacing:0.103px;">Network Access</div>
<div class="t" style="left:601.51px;top:496.60px;font-size:13px;line-height:20px;color:#8b9398;letter-spacing:-0.207px;">Switch IP/FQDN:</div>
<div class="t" style="left:946.92px;top:496.60px;font-size:13px;line-height:20px;color:#8b9398;letter-spacing:-0.086px;">10.0.1.9</div>
<svg class="a" style="left:902.2px;top:501.4px" width="8.6" height="8.6" viewBox="0 0 8.6 8.6"><path d="M4.3 0 V8.6 M0 4.3 H8.6" stroke="#3cc6ba" stroke-width="1.7"/></svg>
<div class="t" style="left:601.51px;top:519.40px;font-size:13px;line-height:20px;color:#8b9398;letter-spacing:-0.165px;">Switch IP/FQDN and Port Name:</div>
<div class="t" style="left:946.92px;top:519.40px;font-size:13px;line-height:20px;color:#8b9398;letter-spacing:-0.092px;">10.0.1.9:2</div>
<svg class="a" style="left:902.2px;top:524.2px" width="8.6" height="8.6" viewBox="0 0 8.6 8.6"><path d="M4.3 0 V8.6 M0 4.3 H8.6" stroke="#3cc6ba" stroke-width="1.7"/></svg>
<div class="t" style="left:601.51px;top:542.50px;font-size:13px;line-height:20px;color:#8b9398;letter-spacing:-0.086px;">Switch Port Alias:</div>
<svg class="a" style="left:902.2px;top:547.3000000000001px" width="8.6" height="8.6" viewBox="0 0 8.6 8.6"><path d="M4.3 0 V8.6 M0 4.3 H8.6" stroke="#3cc6ba" stroke-width="1.7"/></svg>
<div class="t" style="left:601.51px;top:565.30px;font-size:13px;line-height:20px;color:#8b9398;letter-spacing:-0.128px;">Switch Port Connect:</div>
<div class="t" style="left:947.25px;top:565.30px;font-size:13px;line-height:20px;color:#8b9398;letter-spacing:0.001px;">Connected</div>
<div class="t" style="left:601.51px;top:585.30px;font-size:13px;line-height:20px;color:#8b9398;letter-spacing:-0.043px;">Switch Port Name:</div>
<div class="t" style="left:947.25px;top:585.30px;font-size:13px;line-height:20px;color:#8b9398;letter-spacing:0.153px;">2</div>
<svg class="a" style="left:902.2px;top:590.1px" width="8.6" height="8.6" viewBox="0 0 8.6 8.6"><path d="M4.3 0 V8.6 M0 4.3 H8.6" stroke="#3cc6ba" stroke-width="1.7"/></svg>
<div class="t" style="left:601.51px;top:608.50px;font-size:13px;line-height:20px;color:#8b9398;letter-spacing:-0.142px;">Switch Port VLAN:</div>
<div class="t" style="left:947.25px;top:608.50px;font-size:13px;line-height:20px;color:#8b9398;letter-spacing:0.153px;">2</div>
<div class="t" style="left:601.51px;top:628.50px;font-size:13px;line-height:20px;color:#8b9398;letter-spacing:0.019px;">Switch Vendor:</div>
<div class="t" style="left:947.25px;top:628.50px;font-size:13px;line-height:20px;color:#8b9398;letter-spacing:0.017px;">Cisco Meraki</div>
<svg class="a" style="left:902.2px;top:633.3000000000001px" width="8.6" height="8.6" viewBox="0 0 8.6 8.6"><path d="M4.3 0 V8.6 M0 4.3 H8.6" stroke="#3cc6ba" stroke-width="1.7"/></svg>
<div class="t" style="left:601.51px;top:651.50px;font-size:13px;line-height:20px;color:#8b9398;letter-spacing:-0.144px;">Switch VoIP Port :</div>
<div class="t" style="left:946.86px;top:651.50px;font-size:13px;line-height:20px;color:#8b9398;letter-spacing:0.352px;">No</div>
<div class="t" style="left:602.07px;top:671.90px;font-size:13px;line-height:20px;color:#8b9398;letter-spacing:-0.123px;">WLAN Client Connectivity Status:</div>
<div class="t" style="left:946.86px;top:671.90px;font-size:13px;line-height:20px;color:#8b9398;letter-spacing:0.352px;">No</div>
<div class="t" style="left:601.06px;top:742.50px;font-size:13px;line-height:20px;color:#8b9398;letter-spacing:0.016px;">Device ID:</div>
<div class="t" style="left:947.31px;top:742.50px;font-size:13px;line-height:20px;color:#8b9398;letter-spacing:-0.178px;">Q2HP-FRMJ-TC3U</div>
<div class="t" style="left:601.06px;top:762.50px;font-size:13px;line-height:20px;color:#8b9398;letter-spacing:0.045px;">Network Name:</div>
<div class="t" style="left:947.64px;top:762.50px;font-size:13px;line-height:20px;color:#8b9398;letter-spacing:-0.306px;">TEC LAB</div>
<svg class="a" style="left:902.2px;top:767.3000000000001px" width="8.6" height="8.6" viewBox="0 0 8.6 8.6"><path d="M4.3 0 V8.6 M0 4.3 H8.6" stroke="#3cc6ba" stroke-width="1.7"/></svg>
<div class="t" style="left:601.51px;top:785.30px;font-size:13px;line-height:20px;color:#8b9398;letter-spacing:0.044px;">Organization Name:</div>
<div class="t" style="left:947.31px;top:785.30px;font-size:13px;line-height:20px;color:#8b9398;letter-spacing:-0.115px;">SE_Acceleration</div>
<svg class="a" style="left:902.2px;top:790.1px" width="8.6" height="8.6" viewBox="0 0 8.6 8.6"><path d="M4.3 0 V8.6 M0 4.3 H8.6" stroke="#3cc6ba" stroke-width="1.7"/></svg>
<div class="t" style="left:600.42px;top:706.46px;font-size:16px;line-height:20px;color:#9ba4a9;letter-spacing:0.207px;">More</div>
</div>
</body></html>
